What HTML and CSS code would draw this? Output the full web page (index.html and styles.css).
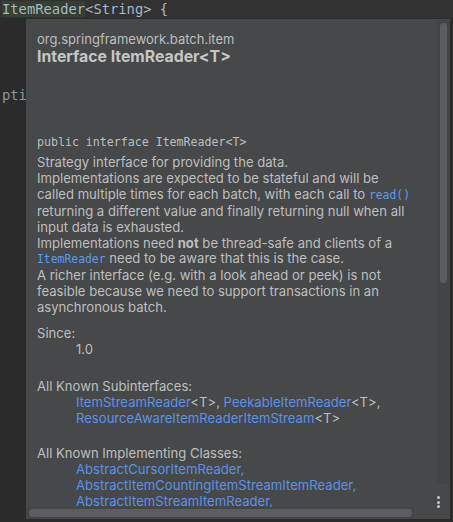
FILE: index.html
```html
<!DOCTYPE html>
<html>
<head>
<meta charset="utf-8">
<link rel="stylesheet" href="styles.css">
</head>
<body>
<div class="editor code">
  <div class="code-line current"><span class="hl">ItemReader</span>&lt;String&gt; {</div>
  <div class="code-line">&nbsp;</div>
  <div class="code-line">&nbsp;</div>
  <div class="code-line">&nbsp;</div>
  <div class="code-line">&nbsp;</div>
  <div class="code-line dim">ption</div>
</div>

<div class="popup">
  <div class="doc">
    <div class="pkg">org.springframework.batch.item</div>
    <div class="title">Interface ItemReader&lt;T&gt;</div>
    <div class="sig">public interface ItemReader&lt;T&gt;</div>
    <div class="desc">
      Strategy interface for providing the data.<br>
      Implementations are expected to be stateful and will be<br>
      called multiple times for each batch, with each call to <a class="code-link">read()</a><br>
      returning a different value and finally returning null when all<br>
      input data is exhausted.<br>
      Implementations need <b>not</b> be thread-safe and clients of a<br>
      <a class="code-link">ItemReader</a> need to be aware that this is the case.<br>
      A richer interface (e.g. with a look ahead or peek) is not<br>
      feasible because we need to support transactions in an<br>
      asynchronous batch.
    </div>
    <dl class="section since">
      <dt>Since:</dt>
      <dd>1.0</dd>
    </dl>
    <dl class="section sub">
      <dt>All Known Subinterfaces:</dt>
      <dd><a class="link">ItemStreamReader</a>&lt;T&gt;, <a class="link">PeekableItemReader</a>&lt;T&gt;,<br><a class="link">ResourceAwareItemReaderItemStream</a>&lt;T&gt;</dd>
    </dl>
    <dl class="section impl">
      <dt>All Known Implementing Classes:</dt>
      <dd><a class="link">AbstractCursorItemReader,</a><br><a class="link">AbstractItemCountingItemStreamItemReader,</a><br><a class="link">AbstractItemStreamItemReader,</a></dd>
    </dl>
  </div>

  <div class="vtrack"><div class="vthumb"></div></div>
  <div class="htrack"><div class="hthumb"></div></div>
  <div class="more"><span></span><span></span><span></span></div>
</div>
</body>
</html>
```
FILE: styles.css
```css
html, body {
  margin: 0;
  padding: 0;
}
body {
  width: 453px;
  height: 522px;
  overflow: hidden;
  background: #2b2b2b;
  position: relative;
}
.code {
  font-family: "DejaVu Sans Mono", "Liberation Mono", monospace;
  font-size: 13.8px;
  line-height: 17.2px;
  color: #a9b7c6;
}
.code-line {
  padding-left: 2px;
  white-space: pre;
}
.code-line.current {
  background: #323232;
  height: 18px;
  line-height: 18px;
}
.hl {
  background: #354035;
}
.code-line.dim {
  color: #8e959b;
}

.popup {
  position: absolute;
  left: 26px;
  top: 19px;
  width: 424px;
  height: 500px;
  background: #46484a;
  overflow: hidden;
}
.doc {
  padding: 12px 0 0 11px;
  color: #bfbfbf;
  font-family: Inter, "Noto Sans", sans-serif;
  font-size: 13.1px;
  line-height: 16px;
  white-space: nowrap;
}
.pkg {
  font-size: 13px;
  line-height: 16px;
}
.title {
  font-size: 15.8px;
  font-weight: 700;
  line-height: 18px;
  margin-top: 1px;
  color: #c6c6c6;
}
.sig {
  font-family: "DejaVu Sans Mono", monospace;
  font-size: 11.6px;
  line-height: 16px;
  margin-top: 68px;
}
.desc {
  line-height: 15.9px;
  margin-top: 5px;
}
.desc b {
  font-weight: 700;
}
.code-link {
  font-family: "DejaVu Sans Mono", monospace;
  font-size: 11.4px;
  color: #5a9bef;
}
.link {
  color: #5994e6;
}
.section {
  margin: 0;
}
.section dd {
  margin-left: 39px;
}
.since {
  margin-top: 9px;
}
.sub {
  margin-top: 20.5px;
}
.impl {
  margin-top: 19px;
}

.vtrack {
  position: absolute;
  left: 411px;
  top: 1px;
  width: 13px;
  height: 464px;
  background: #424446;
}
.vthumb {
  margin: 3px 0 0 3px;
  width: 7px;
  height: 260px;
  border-radius: 4px;
  background: #5b5d60;
}
.htrack {
  position: absolute;
  left: 0;
  top: 488px;
  width: 388px;
  height: 12px;
  background: #434547;
}
.hthumb {
  margin: 2px 0 0 3px;
  width: 383px;
  height: 8px;
  border-radius: 4px;
  background: #5b5d60;
}
.more {
  position: absolute;
  left: 411px;
  top: 477px;
  display: flex;
  flex-direction: column;
  gap: 1.5px;
}
.more span {
  width: 3px;
  height: 3px;
  border-radius: 50%;
  background: #c6c6c6;
}
```
